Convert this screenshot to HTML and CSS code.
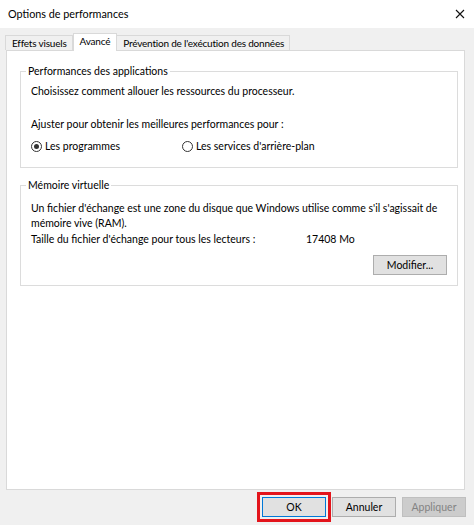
FILE: index.html
```html
<html lang="fr">
<head>
    <meta name="viewport" content="width=device-width, initial-scale=1.0">
    <title>Options de performances</title>
    <link rel="stylesheet" href="styles.css">
</head>
<body>
    <div class="titleBar">
        <span class="title">Options de performances</span>
        <svg class="closeIcon" width="10" height="10" viewBox="0 0 10 10">
            <path d="M1 1 L9 9 M9 1 L1 9" stroke="#111" stroke-width="1.1" fill="none"/>
        </svg>
    </div>
    <div class="dialogBody">
        <div class="tabs">
            <div class="tab">Effets visuels</div>
            <div class="tab selected">Avancé</div>
            <div class="tab">Prévention de l'exécution des données</div>
        </div>
        <div class="tabPanel">
            <fieldset class="group">
                <legend>Performances des applications</legend>
                <p class="line">Choisissez comment allouer les ressources du processeur.</p>
                <p class="line adjust">Ajuster pour obtenir les meilleures performances pour :</p>
                <div class="radioRow">
                    <label class="radio first"><span class="dot checked"></span>Les programmes</label>
                    <label class="radio"><span class="dot"></span>Les services d'arrière-plan</label>
                </div>
            </fieldset>
            <fieldset class="group memory">
                <legend>Mémoire virtuelle</legend>
                <p class="line">Un fichier d'échange est une zone du disque que Windows utilise comme s'il s'agissait de mémoire vive (RAM).</p>
                <div class="sizeRow">
                    <span class="sizeLabel">Taille du fichier d'échange pour tous les lecteurs :</span>
                    <span>17408 Mo</span>
                </div>
                <div class="modifyRow">
                    <button class="winButton modify">Modifier...</button>
                </div>
            </fieldset>
        </div>
        <div class="footer">
            <button class="winButton default">OK</button>
            <button class="winButton">Annuler</button>
            <button class="winButton" disabled>Appliquer</button>
        </div>
    </div>
</body>
</html>
```

FILE: styles.css
```css
body {
    margin: 0;
    width: 474px;
    height: 525px;
    font-family: Lato, "Noto Sans", sans-serif;
    font-size: 10.5px;
    color: #000;
    background-color: #f0f0f0;
    overflow: hidden;
}
.titleBar {
    height: 28px;
    background-color: #fff;
    display: flex;
    align-items: center;
    justify-content: space-between;
    padding: 0 9px 2px 8px;
    box-sizing: border-box;
}
.title {
    font-size: 10.8px;
}
.closeIcon {
    margin-top: 1px;
}
.dialogBody {
    padding: 5px 9px 0 6px;
}
.tabs {
    display: flex;
    height: 17px;
    align-items: flex-end;
    margin-left: -1px;
    position: relative;
    z-index: 1;
    font-size: 10px;
    letter-spacing: -0.2px;
}
.tab {
    height: 15px;
    line-height: 14px;
    padding: 0 5px 0 6px;
    border: 1px solid #d9d9d9;
    border-bottom: none;
    box-sizing: border-box;
    background-color: #f0f0f0;
}
.tab + .tab {
    border-left: none;
}
.tab.selected {
    height: 18px;
    margin-bottom: -1px;
    background-color: #fff;
    padding: 0 6px;
    border-left: 1px solid #d9d9d9;
    line-height: 15px;
}
.tab.selected + .tab {
    border-left: none;
}
.tabPanel {
    background-color: #fff;
    border: 1px solid #d9d9d9;
    height: 440px;
    box-sizing: border-box;
    padding: 13px 6px 0 13px;
}
.group {
    margin: 0;
    padding: 6px 10px 13px 10px;
    border: 1px solid #dcdcdc;
}
.group legend {
    padding: 0 2px;
    margin-left: -5px;
    line-height: 14px;
}
.line {
    margin: 0;
    line-height: 15px;
}
.adjust {
    margin-top: 18px;
}
.radioRow {
    display: flex;
    margin-top: 7px;
    line-height: 15px;
}
.radio {
    display: flex;
    align-items: center;
}
.radio.first {
    width: 151px;
}
.dot {
    width: 9px;
    height: 9px;
    border: 1px solid #333;
    border-radius: 50%;
    margin-right: 3px;
    position: relative;
}
.dot.checked::after {
    content: "";
    position: absolute;
    left: 2px;
    top: 2px;
    width: 5px;
    height: 5px;
    border-radius: 50%;
    background-color: #333;
}
.memory {
    margin-top: 10px;
    padding-top: 9px;
    padding-bottom: 10px;
}
.sizeRow {
    display: flex;
    margin-top: 1px;
    line-height: 15px;
}
.sizeLabel {
    width: 275px;
}
.modifyRow {
    display: flex;
    justify-content: flex-end;
    margin-top: 8px;
}
.winButton {
    font-family: inherit;
    font-size: 10.5px;
    color: #000;
    height: 20px;
    width: 64px;
    padding: 0;
    background-color: #e1e1e1;
    border: 1px solid #adadad;
}
.winButton.modify {
    width: 74px;
}
.winButton.default {
    border-color: #0078d7;
    outline: 3px solid #e3141b;
    outline-offset: 2px;
}
.winButton:disabled {
    background-color: #cccccc;
    border-color: #bfbfbf;
    color: #838383;
}
.footer {
    display: flex;
    justify-content: flex-end;
    gap: 6px;
    padding-top: 7px;
    margin-right: -1px;
}
```
